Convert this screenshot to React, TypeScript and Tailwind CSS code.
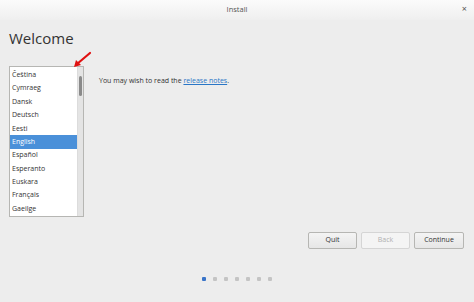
import React from 'react';

const LANGS = ['Čeština', 'Cymraeg', 'Dansk', 'Deutsch', 'Eesti', 'English', 'Español', 'Esperanto', 'Euskara', 'Français', 'Gaeilge'];

export default function App() {
  return (
    <div className="w-[474px] h-[302px] bg-[#ededed] flex flex-col font-['Open_Sans','Noto_Sans',sans-serif] text-[#2e3436] overflow-hidden">
      {/* Title bar */}
      <div className="h-[20px] shrink-0 relative flex items-center justify-center bg-gradient-to-b from-[#fbfbfb] to-[#efefef]">
        <span className="text-[7.5px] text-[#555]">Install</span>
        <span className="absolute right-[7px] top-[4px] text-[9px] leading-none text-[#555]">×</span>
      </div>

      <div className="relative flex-1 flex flex-col px-[9px]">
        <h1 className="mt-[9px] text-[15px] leading-[18px] text-[#333]">Welcome</h1>

        {/* red arrow annotation */}
        <svg className="absolute left-[72px] top-[31px]" width="20" height="18" viewBox="0 0 20 18">
          <path d="M18 2 L5 13" stroke="#e01010" strokeWidth="2.2" strokeLinecap="round" />
          <path d="M2 16 L4 9 L9 14 Z" fill="#e01010" />
        </svg>

        <div className="flex mt-[19px]">
          {/* language list */}
          <div className="w-[75px] h-[151px] bg-white border border-[#b6b6b3] flex shrink-0">
            <div className="flex-1 pt-[1.5px]">
              {LANGS.map(l => (
                <div
                  key={l}
                  className={`h-[13.4px] flex items-center pl-[2px] text-[7px] ${l === 'English' ? 'bg-[#4a90d9] text-white' : 'text-[#333]'}`}
                >
                  {l}
                </div>
              ))}
            </div>
            <div className="w-[6px] bg-[#e4e4e4] border-l border-[#dcdcdc] flex justify-center">
              <div className="w-[3px] h-[20px] mt-[9px] bg-[#8a8a8a] rounded-full" />
            </div>
          </div>

          <div className="pl-[15px] pt-[10px] text-[7px] text-[#333]">
            You may wish to read the <span className="text-[#2a76c6] underline">release notes</span>.
          </div>
        </div>

        {/* buttons */}
        <div className="flex justify-end gap-[4px] mt-[15px] pr-[1px]">
          <div className="w-[49px] h-[17px] flex items-center justify-center border border-[#b6b6b3] rounded-[2px] bg-gradient-to-b from-[#f4f4f4] to-[#e6e6e6] text-[7px] text-[#333]">Quit</div>
          <div className="w-[49px] h-[17px] flex items-center justify-center border border-[#d5d5d5] rounded-[2px] bg-[#f4f4f4] text-[7px] text-[#b0b0b0]">Back</div>
          <div className="w-[50px] h-[17px] flex items-center justify-center border border-[#b6b6b3] rounded-[2px] bg-gradient-to-b from-[#f4f4f4] to-[#e6e6e6] text-[7px] text-[#333]">Continue</div>
        </div>

        {/* page dots */}
        <div className="flex justify-center gap-[7px] mt-[28px] pr-[1px]">
          {[0, 1, 2, 3, 4, 5, 6].map(i => (
            <div key={i} className={`w-[4px] h-[4px] rounded-[1px] ${i === 0 ? 'bg-[#3a74c8]' : 'bg-[#c4c4c4]'}`} />
          ))}
        </div>
      </div>
    </div>
  );
}
